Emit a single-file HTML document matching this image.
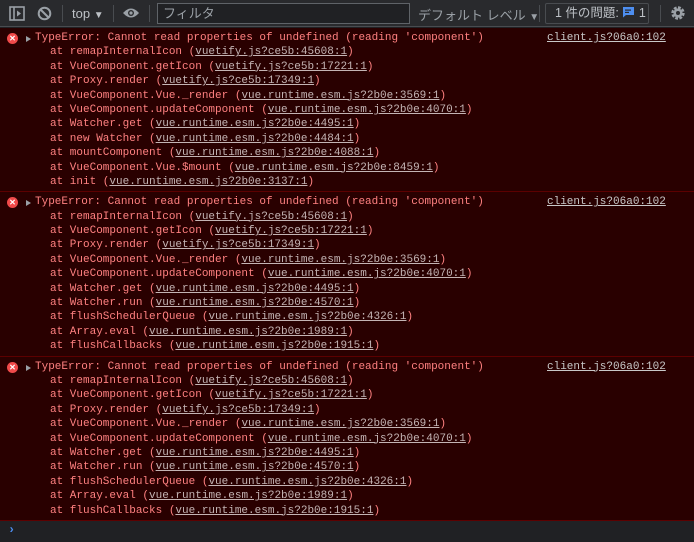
<!DOCTYPE html>
<html><head><meta charset="utf-8"><style>
*{box-sizing:border-box;margin:0;padding:0}
body{width:694px;height:542px;background:#202124;overflow:hidden;font-family:"Liberation Sans","Noto Sans CJK JP",sans-serif;position:relative}
.tb{position:absolute;left:0;top:0;width:694px;height:27px;background:#292a2d;border-bottom:1px solid #494c50;color:#bdc1c6;font-size:13px}
.tb>*{position:absolute;white-space:nowrap}
.sep{top:5px;width:1px;height:17px;background:#494c50}
.blk{background:#290000;border-bottom:1px solid #5c0000;padding:3px 0 2px 0;position:relative;font-family:"Liberation Mono",monospace;font-size:11px;color:#ff8080}
.l{height:14.4px;line-height:14.4px;white-space:pre;padding-left:35px}
.l.s{padding-left:50px}
a{color:#c4b4b4;text-decoration:underline}
.x{position:absolute;left:7px;top:5px;width:11px;height:11px;border-radius:50%;background:#f04a4a;color:#fff;font:bold 8px/11px "Liberation Sans",sans-serif;text-align:center}
.tri{position:absolute;left:26px;top:8px;width:0;height:0;border-left:5px solid #9aa0a6;border-top:3.5px solid transparent;border-bottom:3.5px solid transparent}
.src{position:absolute;left:547px;top:3px;line-height:14.4px}
.src a{color:#c8c8c8}
</style></head><body>
<div class="tb">
<svg style="left:9px;top:6px" width="16" height="15" viewBox="0 0 16 15"><rect x="1" y="1" width="14" height="13" fill="none" stroke="#9aa0a6" stroke-width="1.6"/><line x1="5" y1="1" x2="5" y2="14" stroke="#9aa0a6" stroke-width="1.6"/><path d="M8 4.5 L12 7.5 L8 10.5Z" fill="#9aa0a6"/></svg>
<svg style="left:37px;top:6px" width="15" height="15" viewBox="0 0 15 15"><circle cx="7.5" cy="7.5" r="5.8" fill="none" stroke="#9aa0a6" stroke-width="2"/><line x1="3.5" y1="3.5" x2="11.5" y2="11.5" stroke="#9aa0a6" stroke-width="2"/></svg>
<div class="sep" style="left:62px"></div>
<div style="left:72px;top:6px">top <span style="font-size:10px">▼</span></div>
<div class="sep" style="left:113px"></div>
<svg style="left:122px;top:7px" width="18" height="12" viewBox="0 0 18 12"><path d="M1 6 Q9 -3 17 6 Q9 15 1 6Z" fill="#9aa0a6"/><circle cx="9" cy="6" r="3" fill="#292a2d"/><circle cx="9" cy="6" r="1.6" fill="#9aa0a6"/></svg>
<div class="sep" style="left:149px"></div>
<div style="left:157px;top:3px;width:253px;height:21px;border:1px solid #5f6368;background:#202124;padding-left:5px;line-height:19px;color:#9aa0a6">フィルタ</div>
<div style="left:418px;top:5px;color:#9aa0a6">デフォルト レベル <span style="font-size:10px">▼</span></div>
<div class="sep" style="left:539px"></div>
<div style="left:545px;top:3px;width:104px;height:21px;border:1px solid #494c50;border-radius:2px;line-height:19px;padding-left:9px;color:#bdc1c6;font-size:12.5px">1 件の問題: <svg width="13" height="12" viewBox="0 0 13 12" style="vertical-align:-1px"><path d="M1 1H12V9H4L1 11.5Z" fill="#4d8ef0"/><rect x="3" y="3.5" width="6" height="1.2" fill="#292a2d"/><rect x="3" y="5.8" width="4" height="1.2" fill="#292a2d"/></svg> 1</div>
<div class="sep" style="left:660px"></div>
<svg style="left:670px;top:5px" width="16" height="16" viewBox="0 0 16 16"><circle cx="8" cy="8" r="5" fill="none" stroke="#9aa0a6" stroke-width="3.4" stroke-dasharray="2.6 1.3"/><circle cx="8" cy="8" r="4.6" fill="#9aa0a6"/><circle cx="8" cy="8" r="2" fill="#292a2d"/></svg>
</div>
<div style="position:absolute;top:28px;left:0;width:694px">
<div class="blk"><span class="x">✕</span><span class="tri"></span><span class="src"><a>client.js?06a0:102</a></span>
<div class="l">TypeError: Cannot read properties of undefined (reading 'component')</div>
<div class="l s">at remapInternalIcon (<a>vuetify.js?ce5b:45608:1</a>)</div>
<div class="l s">at VueComponent.getIcon (<a>vuetify.js?ce5b:17221:1</a>)</div>
<div class="l s">at Proxy.render (<a>vuetify.js?ce5b:17349:1</a>)</div>
<div class="l s">at VueComponent.Vue._render (<a>vue.runtime.esm.js?2b0e:3569:1</a>)</div>
<div class="l s">at VueComponent.updateComponent (<a>vue.runtime.esm.js?2b0e:4070:1</a>)</div>
<div class="l s">at Watcher.get (<a>vue.runtime.esm.js?2b0e:4495:1</a>)</div>
<div class="l s">at new Watcher (<a>vue.runtime.esm.js?2b0e:4484:1</a>)</div>
<div class="l s">at mountComponent (<a>vue.runtime.esm.js?2b0e:4088:1</a>)</div>
<div class="l s">at VueComponent.Vue.$mount (<a>vue.runtime.esm.js?2b0e:8459:1</a>)</div>
<div class="l s">at init (<a>vue.runtime.esm.js?2b0e:3137:1</a>)</div>
</div>
<div class="blk"><span class="x">✕</span><span class="tri"></span><span class="src"><a>client.js?06a0:102</a></span>
<div class="l">TypeError: Cannot read properties of undefined (reading 'component')</div>
<div class="l s">at remapInternalIcon (<a>vuetify.js?ce5b:45608:1</a>)</div>
<div class="l s">at VueComponent.getIcon (<a>vuetify.js?ce5b:17221:1</a>)</div>
<div class="l s">at Proxy.render (<a>vuetify.js?ce5b:17349:1</a>)</div>
<div class="l s">at VueComponent.Vue._render (<a>vue.runtime.esm.js?2b0e:3569:1</a>)</div>
<div class="l s">at VueComponent.updateComponent (<a>vue.runtime.esm.js?2b0e:4070:1</a>)</div>
<div class="l s">at Watcher.get (<a>vue.runtime.esm.js?2b0e:4495:1</a>)</div>
<div class="l s">at Watcher.run (<a>vue.runtime.esm.js?2b0e:4570:1</a>)</div>
<div class="l s">at flushSchedulerQueue (<a>vue.runtime.esm.js?2b0e:4326:1</a>)</div>
<div class="l s">at Array.eval (<a>vue.runtime.esm.js?2b0e:1989:1</a>)</div>
<div class="l s">at flushCallbacks (<a>vue.runtime.esm.js?2b0e:1915:1</a>)</div>
</div>
<div class="blk"><span class="x">✕</span><span class="tri"></span><span class="src"><a>client.js?06a0:102</a></span>
<div class="l">TypeError: Cannot read properties of undefined (reading 'component')</div>
<div class="l s">at remapInternalIcon (<a>vuetify.js?ce5b:45608:1</a>)</div>
<div class="l s">at VueComponent.getIcon (<a>vuetify.js?ce5b:17221:1</a>)</div>
<div class="l s">at Proxy.render (<a>vuetify.js?ce5b:17349:1</a>)</div>
<div class="l s">at VueComponent.Vue._render (<a>vue.runtime.esm.js?2b0e:3569:1</a>)</div>
<div class="l s">at VueComponent.updateComponent (<a>vue.runtime.esm.js?2b0e:4070:1</a>)</div>
<div class="l s">at Watcher.get (<a>vue.runtime.esm.js?2b0e:4495:1</a>)</div>
<div class="l s">at Watcher.run (<a>vue.runtime.esm.js?2b0e:4570:1</a>)</div>
<div class="l s">at flushSchedulerQueue (<a>vue.runtime.esm.js?2b0e:4326:1</a>)</div>
<div class="l s">at Array.eval (<a>vue.runtime.esm.js?2b0e:1989:1</a>)</div>
<div class="l s">at flushCallbacks (<a>vue.runtime.esm.js?2b0e:1915:1</a>)</div>
</div>
<div style="height:20px;padding-left:8px;color:#4d8ef0;font:bold 12px/18px 'Liberation Mono',monospace">›</div>
</div>
</body></html>
